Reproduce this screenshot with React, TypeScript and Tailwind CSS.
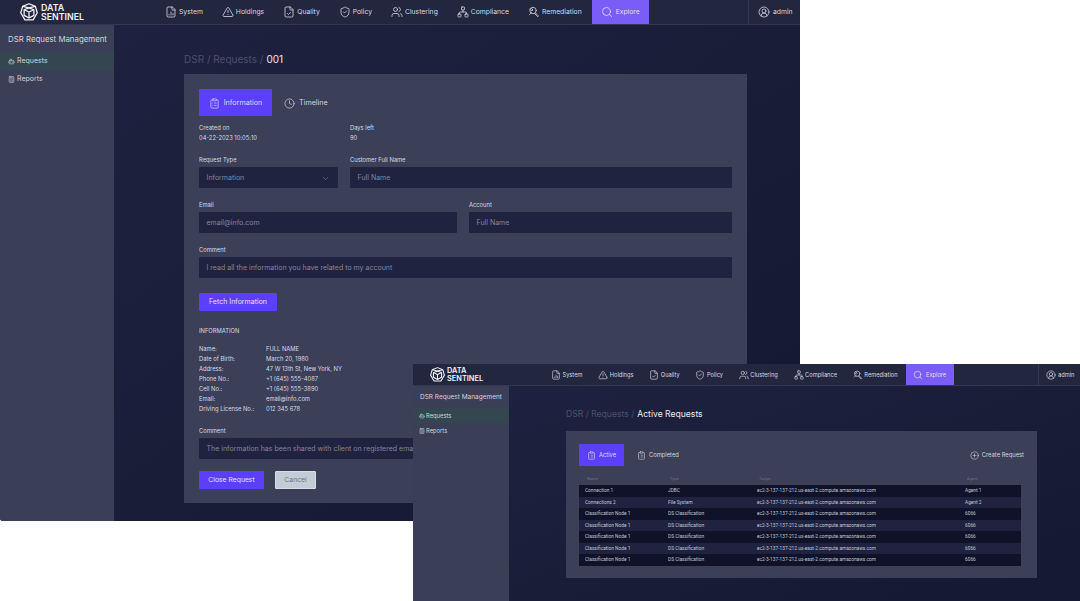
import React from "react";
import {
  Calculator,
  ChevronDown,
  CirclePlus,
  CircleUserRound,
  ClipboardList,
  Clock,
  FileChartColumn,
  FileCheck,
  Network,
  Search,
  ShieldCheck,
  TriangleAlert,
  Users,
  Bot,
  type LucideProps,
} from "lucide-react";

const FONT = "font-['Inter','Noto_Sans',sans-serif]";

// wrench laid over a magnifier, lucide has no such icon
function RemediationIcon({ size, strokeWidth }: LucideProps) {
  return (
    <svg width={size} height={size} viewBox="0 0 24 24" fill="none" stroke="currentColor" strokeWidth={strokeWidth} strokeLinecap="round" strokeLinejoin="round">
      <circle cx="10" cy="9" r="6.5" />
      <path d="M15 14l6 6-1.5 1.5-6-6" />
      <path d="M7 4.5 10 8l-2 2-4-3" />
      <path d="M3 17l4-4" />
    </svg>
  );
}

const NAV = [
  { label: "System", icon: FileChartColumn },
  { label: "Holdings", icon: TriangleAlert },
  { label: "Quality", icon: FileCheck },
  { label: "Policy", icon: ShieldCheck },
  { label: "Clustering", icon: Users },
  { label: "Compliance", icon: Network },
  { label: "Remediation", icon: RemediationIcon },
];

const INFO = [
  ["Name:", "FULL NAME"],
  ["Date of Birth:", "March 20, 1980"],
  ["Address:", "47 W 13th St, New York, NY"],
  ["Phone No.:", "+1 (645) 555-4087"],
  ["Cell No.:", "+1 (645) 555-3890"],
  ["Email:", "email@info.com"],
  ["Driving License No.:", "012 345 678"],
];

const HOST = "ec2-3-137-137-212.us-east-2.compute.amazonaws.com";
const ROWS = [
  ["Connection 1", "JDBC", HOST, "Agent 1"],
  ["Connections 2", "File System", HOST, "Agent 2"],
  ["Classification Node 1", "DS Classification", HOST, "6066"],
  ["Classification Node 1", "DS Classification", HOST, "6066"],
  ["Classification Node 1", "DS Classification", HOST, "6066"],
  ["Classification Node 1", "DS Classification", HOST, "6066"],
  ["Classification Node 1", "DS Classification", HOST, "6066"],
];

function Logo({ size }: { size: number }) {
  return (
    <svg width={size} height={size} viewBox="0 0 24 24" fill="none" stroke="#f1f2f6" strokeWidth="1.7" strokeLinejoin="round" className="shrink-0">
      <path d="M12 1 20.5 4.5l2.5 8.5-5.5 9.5h-11L1 13l2.5-8.5z" />
      <path d="M12 6.5 18.5 9v7.5L12 20l-6.5-3.500V9z" />
      <path d="M5.500 9l6.500 3 6.500-3M12 12v8M3.500 4.500l8.500 2 8.500-2" />
    </svg>
  );
}

// the two windows share one header, only the metrics differ
function Header({ small }: { small?: boolean }) {
  return (
    <div className={`flex shrink-0 items-stretch bg-[#22263f] border-b border-[#33374f] text-[#d6d8e2] ${small ? "h-[22px] pl-[17px] text-[5.7px]" : "h-[25px] pl-[20px] text-[6.8px]"}`}>
      <div className={`flex items-center ${small ? "w-[121px] gap-[2px]" : "w-[145px] gap-[3px]"}`}>
        <Logo size={small ? 15 : 18} />
        <span className={`font-semibold text-[#f1f2f6] ${small ? "text-[7.4px] leading-[7.5px]" : "text-[8.8px] leading-[9px]"}`}>
          DATA
          <br />
          SENTINEL
        </span>
      </div>
      <div className={`flex items-center ${small ? "gap-[15.8px]" : "gap-[19px]"}`}>
        {NAV.map(({ label, icon: Icon }) => (
          <div key={label} className={`flex items-center ${small ? "gap-[1.5px]" : "gap-[2px]"}`}>
            <Icon size={small ? 10 : 12} strokeWidth={1.6} />
            <span className="pt-[1px]">{label}</span>
          </div>
        ))}
      </div>
      <div className={`flex items-center justify-center bg-[#7a5cf7] text-[#e4defc] ${small ? "ml-[8px] w-[48px] gap-[3px]" : "ml-[10px] w-[57px] gap-[3px]"}`}>
        <Search size={small ? 10 : 12} strokeWidth={1.6} />
        <span className="pt-[1px]">Explore</span>
      </div>
      <div className={`ml-auto flex items-center border-l border-[#33374f] ${small ? "w-[42px] pl-[7px] gap-[2px]" : "w-[52px] pl-[9px] gap-[3px]"}`}>
        <CircleUserRound size={small ? 10 : 12} strokeWidth={1.6} />
        <span className="pt-[1px]">admin</span>
      </div>
    </div>
  );
}

function Sidebar({ small }: { small?: boolean }) {
  return (
    <div className={`shrink-0 bg-[#3a3e57] text-[#d3d5df] ${small ? "w-[96px] text-[5.8px]" : "w-[114px] text-[7px]"}`}>
      <div className={`whitespace-nowrap ${small ? "pl-[7px] pt-[7px] h-[22px] text-[6.5px]" : "pl-[8px] pt-[9px] h-[27px] text-[7.85px]"}`}>DSR Request Management</div>
      <div className={`flex items-center bg-[#34464f] ${small ? "h-[15px] pl-[6px] gap-[1px]" : "h-[18px] pl-[8px] gap-[2px]"}`}>
        <Bot size={small ? 6 : 7} />
        <span className="pt-[1px]">Requests</span>
      </div>
      <div className={`flex items-center ${small ? "h-[15px] pl-[6px] gap-[1px]" : "h-[18px] pl-[8px] gap-[2px]"}`}>
        <Calculator size={small ? 6 : 7} />
        <span className="pt-[1px]">Reports</span>
      </div>
    </div>
  );
}

function Field({ label, value, className, chevron }: { label: string; value: string; className?: string; chevron?: boolean }) {
  return (
    <div className={className}>
      <div className="mb-[2px] h-[10px] text-[5.8px] leading-[10px] text-[#d8dae4]">{label}</div>
      <div className="flex h-[21px] items-center justify-between rounded-[1px] bg-[#1f2340] pl-[7.5px] pr-[8px] pt-[1px] text-[7px] text-[#83869a]">
        <span className="whitespace-nowrap">{value}</span>
        {chevron && <ChevronDown size={9} strokeWidth={1.5} />}
      </div>
    </div>
  );
}

function RequestWindow() {
  return (
    <div className="absolute left-0 top-0 flex h-[521px] w-[800px] flex-col overflow-hidden rounded-b-[3px] bg-[#191d36]">
      <Header />
      <div className="flex flex-1">
        <Sidebar />
        <div className="flex-1 bg-gradient-to-br from-[#1e2240] to-[#141830] pl-[70px] pr-[53px]">
          <div className="flex h-[49px] items-center gap-[3px] pt-[19px] text-[10px] text-[#4c5069]">
            DSR / Requests / <span className="text-[#e8e9ef]">001</span>
          </div>
          <div className="h-[429px] bg-[#3b3f58] px-[15px] pt-[15px]">
            <div className="flex h-[27px] items-stretch text-[7.2px]">
              <div className="flex w-[73px] items-center justify-center gap-[4px] bg-[#5c3ffb] pt-[1px] text-[#dcd6fe]">
                <ClipboardList size={11} strokeWidth={1.5} />
                Information
              </div>
              <div className="ml-[12px] flex items-center gap-[4px] pt-[2px] text-[#d3d5df]">
                <Clock size={11} strokeWidth={1.5} />
                Timeline
              </div>
            </div>
            <div className="mt-[7px] flex text-[5.8px] leading-[10px] text-[#d8dae4]">
              <div className="w-[151px]">
                <div>Created on</div>
                <div>04-22-2023 10:05:10</div>
              </div>
              <div>
                <div>Days left</div>
                <div>90</div>
              </div>
            </div>
            <div className="mt-[12px] flex gap-[12px]">
              <Field label="Request Type" value="Information" className="w-[139px]" chevron />
              <Field label="Customer Full Name" value="Full Name" className="flex-1" />
            </div>
            <div className="mt-[12px] flex gap-[12px]">
              <Field label="Email" value="email@info.com" className="w-[258px]" />
              <Field label="Account" value="Full Name" className="flex-1" />
            </div>
            <Field label="Comment" value="I read all the information you have related to my account" className="mt-[12px]" />
            <button className="mt-[15px] block h-[18px] w-[78px] rounded-[1px] bg-[#5c3ffb] text-[7px] text-[#e4e0fe]">Fetch Information</button>
            <div className="mt-[15px] h-[10px] text-[5.8px] leading-[10px] text-[#d8dae4]">INFORMATION</div>
            <div className="mt-[8px] text-[5.8px] leading-[10px] text-[#d8dae4]">
              {INFO.map(([k, v]) => (
                <div key={k} className="flex h-[10px]">
                  <span className="w-[67px] whitespace-nowrap">{k}</span>
                  <span>{v}</span>
                </div>
              ))}
            </div>
            <Field label="Comment" value="The information has been shared with client on registered email" className="mt-[12px]" />
            <div className="mt-[12px] flex h-[18px] gap-[11px] text-[6.8px]">
              <button className="w-[65px] rounded-[1px] bg-[#5c3ffb] text-[#e4e0fe]">Close Request</button>
              <button className="w-[41px] rounded-[1px] border border-[#d7dee5] bg-[#c2ccd6] text-[#6f7488]">Cancel</button>
            </div>
          </div>
        </div>
      </div>
    </div>
  );
}

function ActiveWindow() {
  return (
    <div className="absolute left-[413px] top-[364px] flex h-[237px] w-[667px] flex-col overflow-hidden bg-[#191d36]">
      <Header small />
      <div className="flex flex-1">
        <Sidebar small />
        <div className="flex-1 bg-gradient-to-br from-[#1e2240] to-[#141830] pl-[57px] pr-[43px]">
          <div className="flex h-[45px] items-center gap-[3px] pt-[12px] text-[8.6px] text-[#4c5069]">
            DSR / Requests / <span className="text-[#e8e9ef]">Active Requests</span>
          </div>
          <div className="h-[147px] bg-[#3b3f58] pl-[13px] pr-[16px] pt-[13px]">
            <div className="flex h-[22px] items-stretch text-[5.8px]">
              <div className="flex w-[45px] items-center justify-center gap-[3px] bg-[#5c3ffb] text-[#dcd6fe]">
                <ClipboardList size={9} strokeWidth={1.5} />
                Active
              </div>
              <div className="ml-[13px] flex items-center gap-[3px] pt-[1px] text-[#d3d5df]">
                <ClipboardList size={9} strokeWidth={1.5} />
                Completed
              </div>
              <div className="-mr-[3px] ml-auto flex items-center gap-[3px] pt-[1px] text-[#d3d5df]">
                <CirclePlus size={9} strokeWidth={1.5} />
                Create Request
              </div>
            </div>
            <table className="mt-[7px] w-full table-fixed border-collapse font-['Roboto',sans-serif] text-[4.8px] text-[#c3c5d0]">
              <colgroup>
                <col className="w-[83px]" />
                <col className="w-[89px]" />
                <col className="w-[208px]" />
                <col />
              </colgroup>
              <thead>
                <tr className="h-[12px] text-[4.2px] text-[#6d7086]">
                  {["Name", "Type", "Target", "Agent"].map(h => (
                    <th key={h} className="pl-[8px] text-left font-normal">{h}</th>
                  ))}
                </tr>
              </thead>
              <tbody>
                {ROWS.map((r, i) => (
                  <tr key={i} className={`h-[11.5px] ${i % 2 === 0 ? "bg-[#0f1228]" : "bg-[#1f2340]"}`}>
                    {r.map((c, j) => (
                      <td key={j} className="whitespace-nowrap pl-[6px]">{c}</td>
                    ))}
                  </tr>
                ))}
              </tbody>
            </table>
          </div>
        </div>
      </div>
    </div>
  );
}

export default function App() {
  return (
    <div className={`relative h-[601px] w-[1080px] overflow-hidden bg-white ${FONT}`}>
      <RequestWindow />
      <ActiveWindow />
    </div>
  );
}
